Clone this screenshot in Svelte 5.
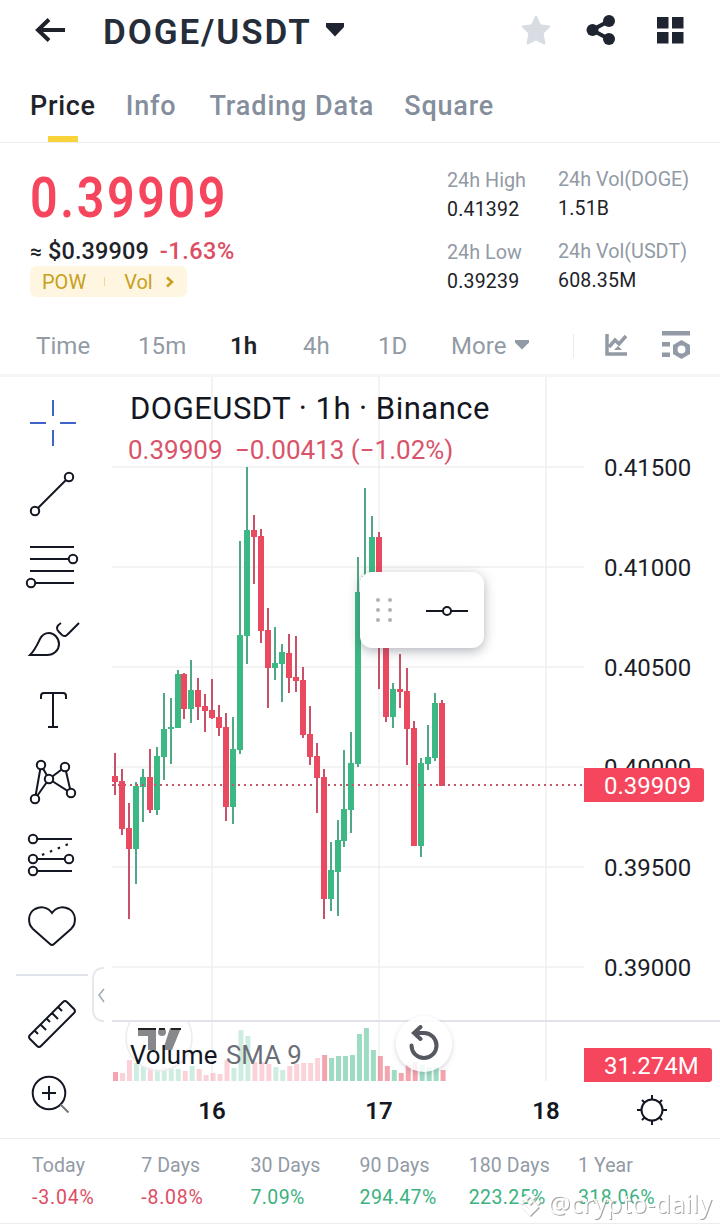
<script>
    const tabs = ['Price', 'Info', 'Trading Data', 'Square'];
    const intervals = ['Time', '15m', '1h', '4h', '1D'];

    const market = [
        { label: '24h High', value: '0.41392' },
        { label: '24h Vol(DOGE)', value: '1.51B' },
        { label: '24h Low', value: '0.39239' },
        { label: '24h Vol(USDT)', value: '608.35M' }
    ];

    const performance = [
        { label: 'Today', value: '-3.04%' },
        { label: '7 Days', value: '-8.08%' },
        { label: '30 Days', value: '7.09%' },
        { label: '90 Days', value: '294.47%' },
        { label: '180 Days', value: '223.25%' },
        { label: '1 Year', value: '318.06%' }
    ];

    const levels = [
        { y: 467, text: '0.41500' },
        { y: 567, text: '0.41000' },
        { y: 667, text: '0.40500' },
        { y: 767, text: '0.40000' },
        { y: 867, text: '0.39500' },
        { y: 967, text: '0.39000' }
    ];

    const days = [
        { x: 212, text: '16' },
        { x: 379, text: '17' },
        { x: 546, text: '18' }
    ];

    // x, high, body top, body bottom, low, rising, volume height
    const candles = [
        [115, 753, 776, 782, 795, 0, 9], [122, 769, 781, 829, 835, 0, 8],
        [129, 803, 828, 849, 919, 0, 21], [136, 782, 786, 849, 884, 1, 18],
        [143, 769, 777, 787, 822, 1, 16], [150, 749, 777, 810, 813, 0, 14],
        [157, 747, 756, 810, 815, 1, 12], [164, 693, 729, 757, 780, 1, 14],
        [171, 698, 727, 729, 764, 1, 12], [178, 670, 674, 728, 728, 1, 12],
        [184, 673, 674, 709, 719, 0, 10], [191, 660, 690, 709, 723, 1, 15],
        [198, 678, 690, 707, 720, 0, 12], [205, 694, 706, 711, 732, 0, 6],
        [212, 679, 710, 718, 719, 0, 8], [219, 705, 717, 728, 736, 0, 7],
        [226, 713, 727, 807, 821, 0, 21], [233, 717, 749, 807, 824, 1, 13],
        [240, 541, 635, 750, 754, 1, 51], [247, 467, 530, 636, 664, 1, 45],
        [254, 515, 530, 537, 584, 0, 19], [261, 529, 536, 631, 643, 0, 19],
        [268, 608, 630, 668, 708, 0, 17], [275, 627, 663, 668, 680, 1, 14],
        [282, 644, 652, 664, 702, 1, 11], [289, 634, 653, 678, 693, 0, 15],
        [296, 636, 677, 681, 692, 0, 17], [303, 667, 680, 735, 738, 0, 18],
        [310, 706, 734, 757, 765, 0, 18], [317, 743, 756, 778, 813, 0, 23],
        [324, 769, 777, 899, 919, 0, 26], [331, 842, 870, 899, 911, 1, 23],
        [338, 820, 840, 872, 916, 1, 25], [344, 750, 809, 841, 847, 1, 25],
        [351, 732, 763, 810, 833, 1, 26], [358, 557, 592, 764, 767, 1, 47],
        [365, 488, 576, 592, 600, 1, 53], [372, 516, 537, 576, 600, 1, 31],
        [379, 532, 537, 620, 689, 0, 25], [386, 600, 620, 717, 722, 0, 15],
        [393, 683, 689, 717, 728, 1, 11], [400, 654, 689, 692, 708, 0, 8],
        [407, 668, 691, 729, 765, 0, 16], [414, 721, 728, 846, 846, 0, 19],
        [421, 758, 763, 846, 857, 1, 16], [428, 725, 757, 764, 770, 1, 14],
        [435, 693, 703, 758, 761, 1, 14], [442, 700, 703, 786, 786, 0, 11]
    ].map(([x, high, top, bottom, low, up, volume], i) => ({
        x, high, top, bottom, low, volume, i,
        side: up ? 'up' : 'down',
        faded: i > 0 && i < 30
    }));
</script>

<div class="page">
    <header>
        <svg class="back" width="32" height="28" viewBox="0 0 32 28">
            <path d="M30 14H3M14 3.500 3 14l11 10.500" />
        </svg>
        <h1>DOGE/USDT</h1>
        <svg class="caret" width="18" height="14" viewBox="0 0 18 14">
            <path d="M0 0h18v4l-9 9.500L0 4z" />
        </svg>
        <div class="actions">
            <svg width="32" height="32" viewBox="0 0 32 32">
                <path class="star" d="m16 2.500 4.100 8.700 9.400 1.200-6.900 6.600 1.800 10.500L16 25.400l-8.400 4.100L9.400 19l-6.900-6.600 9.400-1.200z" />
            </svg>
            <svg width="32" height="32" viewBox="0 0 32 32">
                <path class="link" d="M24 7 7 16l17 9" />
                <circle cx="24" cy="7" r="6" /><circle cx="7.500" cy="16" r="6" /><circle cx="24" cy="25" r="6" />
            </svg>
            <svg width="28" height="28" viewBox="0 0 28 28">
                <path d="M1 1h11.500v11.500H1zM16 1h11.500v11.500H16zM1 16h11.500v11.500H1zM16 16h11.500v11.500H16z" />
            </svg>
        </div>
    </header>

    <nav class="tabs">
        {#each tabs as tab, i}
            <span class:active={i === 0}>{tab}</span>
        {/each}
    </nav>

    <section class="summary">
        <div class="quote">
            <div class="price">0.39909</div>
            <div class="fiat"><span class="approx">≈</span> $0.39909 <span class="change">-1.63%</span></div>
            <div class="tags">
                <span>POW</span>
                <i></i>
                <span>Vol</span>
                <svg width="10" height="12" viewBox="0 0 10 12"><path d="m2 1.500 5 4.500-5 4.500" /></svg>
            </div>
        </div>
        <dl class="market">
            {#each market as item}
                <div>
                    <dt>{item.label}</dt>
                    <dd>{item.value}</dd>
                </div>
            {/each}
        </dl>
    </section>

    <nav class="intervals">
        {#each intervals as interval}
            <span class:active={interval === '1h'}>{interval}</span>
        {/each}
        <span class="more">More <svg width="14" height="10" viewBox="0 0 14 10"><path d="M0 0h14v2.500L7 9.500 0 2.500z" /></svg></span>
        <i></i>
        <svg class="indicator" width="24" height="24" viewBox="0 0 24 24">
            <path class="line" d="M2 1v20h20M4 14l6-7 4 4 7-8" />
            <path d="m9 17 4-4 4 4z" />
        </svg>
        <svg class="settings" width="28" height="28" viewBox="0 0 28 28">
            <path d="M0 0h28v4.500H0zM0 11h8v4.500H0zM0 21.500h8V26H0z" />
            <path fill-rule="evenodd" d="m19.500 9 8.500 5v9l-8.500 5-8.500-5v-9zM19.500 14.500a4 4 0 1 0 0 8 4 4 0 0 0 0-8z" />
        </svg>
    </nav>

    <main>
        <aside class="toolbar">
            <svg viewBox="-30 -36 60 72" class="cross">
                <path d="M1-23v16M1 7v16M-22 0h16M8 0h16" />
            </svg>
            <svg viewBox="-30 -36 60 72">
                <path d="m-17 16 34-34" />
                <circle cx="-17" cy="16" r="4.200" /><circle cx="17" cy="-18" r="4.200" />
            </svg>
            <svg viewBox="-30 -36 60 72">
                <path d="M-22-20h44M-22-8h44M-22 4h44M-22 16h44" />
                <circle cx="21" cy="-8" r="4.200" /><circle cx="-21" cy="16" r="4.200" />
            </svg>
            <svg viewBox="-30 -36 60 72">
                <path d="M-22 16C-17 11-15 6-12 0C-9-6-4-6-3-6C2-6 7-1 7 5S2 16-5 16zM9-16c-5 3-5 6-2 9l3 3c3 2 4 1 6-1L27-16" />
            </svg>
            <svg viewBox="-30 -36 60 72">
                <path d="M-11-12v-3q0-3 3-3H11q3 0 3 3v3M1-18v34M-4 16H6" />
            </svg>
            <svg viewBox="-30 -36 60 72">
                <path d="M-17 16-11-18-3-4-17 16M-3-4 13-16 19 10z" />
                <circle cx="-11" cy="-18" r="4.200" /><circle cx="13" cy="-16" r="4.200" />
                <circle cx="-3" cy="-4" r="4.200" /><circle cx="-17" cy="16" r="4.200" /><circle cx="19" cy="10" r="4.200" />
            </svg>
            <svg viewBox="-30 -36 60 72">
                <path d="M-19-16h39M-19 4h36M-19 16h39" />
                <path class="dots" d="m-10 0 29-12" />
                <circle cx="-19" cy="-16" r="4.200" /><circle cx="-19" cy="4" r="4.200" />
                <circle cx="17" cy="4" r="4.200" /><circle cx="-19" cy="16" r="4.200" />
            </svg>
            <svg viewBox="-30 -36 60 72">
                <path d="M0-14C-4-20-11-21-17-18c-7 4-8 14-2 20L-2 17q2 2 4 0L19 2c6-6 5-16-2-20C11-21 4-20 0-14z" />
            </svg>
            <hr />
            <svg viewBox="-30 -36 60 72">
                <path d="M11-22q2-2 4 0l7 7q2 2 0 4L-11 22q-2 2-4 0l-7-7q-2-2 0-4zM-18 6l4 4M-12 0l6 6M-6-6l4 4M0-11l6 6M6-17l4 4" />
            </svg>
            <svg viewBox="-30 -36 60 72">
                <circle cx="-3" cy="-3" r="16.300" />
                <path d="M-3-10V4M-10-3H4" />
                <path class="handle" d="m8.500 8.500 8 8" />
            </svg>
        </aside>

        <div class="chart">
            <svg width="628" height="761" viewBox="92 377 628 761">
                {#each days as day}
                    <path class="grid" d="M{day.x} 377V1081" />
                    <text class="day" x={day.x} y="1119">{day.text}</text>
                {/each}
                {#each levels as level}
                    <path class="grid" d="M112 {level.y}H584" />
                    <text class="level" x="604" y={level.y + 9}>{level.text}</text>
                {/each}
                <path class="pane" d="M112 1021H720" />

                {#each candles as c}
                    <g class={c.side}>
                        <rect x={c.x - 1} y={c.high} width="2" height={c.low - c.high} class="wick" />
                        <rect x={c.x - 3} y={c.top} width="6" height={c.bottom - c.top} />
                        <rect x={113 + c.i * 6.97} y={1081 - c.volume} width="5" height={c.volume} class="volume" class:faded={c.faded} />
                    </g>
                {/each}

                <path class="last" d="M112 785H584" />
                <path class="tag" d="M584 768h117q3 0 3 3v28q0 3-3 3H584zM584 1048h125q3 0 3 3v28q0 3-3 3H584z" />
                <text class="tag-text" x="604" y="794">0.39909</text>
                <text class="tag-text" x="604" y="1074">31.274M</text>

                <text class="symbol" x="130" y="419">DOGEUSDT · 1h · Binance</text>
                <text class="delta" x="128" y="459">0.39909</text>
                <text class="delta" x="235" y="459">−0.00413 (−1.02%)</text>

                <path class="logo-disc" d="M130 1022A33 33 0 1 0 188 1022" />
                <path class="logo" d="M138 1028h18v22h-8v-14h-10zM170 1028h11l-9 22h-9z" />
                <circle class="logo" cx="162" cy="1032" r="4" />
                <path class="logo-top" d="M138 1029h18M159 1029h6M171 1029h10" />
                <text class="legend" x="130" y="1064">Volume</text>
                <text class="legend muted" x="226" y="1064">SMA 9</text>

                <path class="collapse" d="M104 968q-11 0-11 12v29q0 12 11 12" />
                <path class="chevron" d="m104 989-5 6 5 7" />

                <g class="sun">
                    <circle cx="652" cy="1110" r="10.500" />
                    <path d="M652 1095v4M652 1121v4M637 1110h4M663 1110h4M642 1100l2.500 2.500M659.500 1117.500l2.500 2.500M662 1100l-2.500 2.500M644.500 1117.500l-2.500 2.500" />
                </g>
            </svg>

            <div class="floating">
                <svg width="20" height="28" viewBox="0 0 20 28">
                    {#each [4, 14, 24] as y}
                        <circle cx="4" cy={y} r="2" /><circle cx="16" cy={y} r="2" />
                    {/each}
                </svg>
                <svg class="stroke" width="42" height="12" viewBox="0 0 42 12">
                    <path d="M0 6h42" />
                    <circle cx="21" cy="6" r="4" />
                </svg>
            </div>

            <div class="reset">
                <svg width="32" height="38" viewBox="0 0 32 38">
                    <path d="M3.500 20.500A12.500 12.500 0 1 0 16 8H6M12.500 2 6 8l6.500 6" />
                </svg>
            </div>
        </div>
    </main>

    <footer>
        {#each performance as item}
            <div>
                <span>{item.label}</span>
                <b class:negative={item.value.startsWith('-')}>{item.value}</b>
            </div>
        {/each}
        <div class="watermark">
            <svg width="26" height="28" viewBox="0 0 26 28">
                <path d="m7 8 6-6 6 6-3 3-3-3-3 3zM2 13l3-3 3 3-3 3zM18 13l3-3 3 3-3 3zM10 13l3-3 3 3-3 3zM4 18l3-3 6 6 6-6 3 3-9 9z" />
            </svg>
            <span>@crypto-daily</span>
        </div>
    </footer>
</div>

<style>
    :global(body) {
        background: #fff;
    }

    .page {
        width: 720px;
        height: 1225px;
        overflow: hidden;
        position: relative;
        background: #fff;
        color: #1e2329;
        font-family: Roboto, "Liberation Sans", sans-serif;
    }

    svg {
        display: block;
        flex: none;
    }

    header {
        display: flex;
        align-items: center;
        height: 60px;
        padding: 0 36px 0 35px;
    }

    .back path {
        fill: none;
        stroke: #1e2329;
        stroke-width: 4;
    }

    h1 {
        margin: 5px 0 0 36px;
        width: 208px;
        font-size: 35px;
        font-weight: 600;
        line-height: 40px;
        letter-spacing: 1.9px;
        white-space: nowrap;
        color: #252d3b;
    }

    .caret {
        margin-left: 15px;
        fill: #1e2530;
    }

    .actions {
        display: flex;
        align-items: center;
        gap: 33px;
        margin-left: auto;
        fill: #1e2530;
    }

    .actions svg:last-child {
        margin-left: 6px;
    }

    .star {
        fill: #d9dde3;
        stroke: #d9dde3;
        stroke-width: 2;
        stroke-linejoin: round;
    }

    .link {
        fill: none;
        stroke: #1e2530;
        stroke-width: 4;
    }

    .tabs {
        display: flex;
        gap: 30px;
        height: 82px;
        padding: 0 30px;
        border-bottom: 1px solid #eaecef;
        font-size: 27px;
        font-weight: 500;
        line-height: 93px;
        letter-spacing: 0.8px;
        color: #848e9c;
    }

    .tabs span:nth-child(3) {
        letter-spacing: 0.9px;
        margin-left: 3px;
    }

    .tabs .active {
        position: relative;
        letter-spacing: 0.7px;
        color: #1e2329;
    }

    .tabs .active::after {
        content: '';
        position: absolute;
        left: 18px;
        bottom: 0;
        width: 30px;
        height: 6px;
        background: #f8d33a;
    }

    .summary {
        display: flex;
        height: 173px;
    }

    .quote {
        width: 417px;
        padding: 24px 0 0 30px;
    }

    .price {
        height: 62px;
        font-size: 55px;
        font-weight: 600;
        line-height: 62px;
        letter-spacing: 3px;
        transform: scaleX(0.88);
        transform-origin: 0 0;
        color: #f6465d;
    }

    .fiat {
        margin-top: 7px;
        font-size: 23.500px;
        font-weight: 500;
        line-height: 30px;
        letter-spacing: 0.1px;
        white-space: nowrap;
    }

    .approx {
        font-size: 21px;
    }

    .change {
        margin-left: 5px;
        letter-spacing: 0.5px;
        color: #dd4d64;
    }

    .tags {
        display: flex;
        align-items: center;
        box-sizing: border-box;
        width: 157px;
        height: 31px;
        margin-top: -1px;
        padding: 0 12px;
        border-radius: 7px;
        background: #fef6e0;
        font-size: 20px;
        color: #c99f1d;
    }

    .tags i {
        width: 1px;
        height: 9px;
        margin: 0 19px 0 18px;
        background: #ecd99a;
    }

    .tags svg {
        margin-left: auto;
        fill: none;
        stroke: #c99f1d;
        stroke-width: 2.5;
    }

    .market {
        display: grid;
        grid-template-columns: 111px 150px;
        grid-auto-rows: 72px;
        margin: 0;
        padding-top: 25px;
        white-space: nowrap;
    }

    .market div:nth-child(even) {
        margin-top: -1px;
    }

    .market dt {
        font-size: 19.800px;
        line-height: 26px;
        color: #929aa5;
    }

    .market dd {
        margin: 3px 0 0;
        font-size: 19.500px;
        line-height: 26px;
        letter-spacing: 0.2px;
    }

    .intervals {
        display: flex;
        align-items: center;
        box-sizing: border-box;
        height: 61px;
        padding: 2px 30px 0 36px;
        border-bottom: 3px solid #f5f5f5;
        font-size: 24px;
        letter-spacing: 0.1px;
        color: #929aa5;
    }

    .intervals span:nth-child(1) { width: 102px; }
    .intervals span:nth-child(2) { width: 92px; }
    .intervals span:nth-child(3) { width: 73px; }
    .intervals span:nth-child(4) { width: 75px; }
    .intervals span:nth-child(5) { width: 73px; }

    .intervals .active {
        font-weight: 600;
        color: #1e2329;
    }

    .intervals svg {
        fill: #929aa5;
        margin-top: -2px;
    }

    .more {
        display: flex;
        align-items: center;
        gap: 8px;
        width: 122px;
    }

    .intervals i {
        width: 1px;
        height: 24px;
        margin-right: 31px;
        background: #eaecef;
    }

    .indicator .line {
        fill: none;
        stroke: #929aa5;
        stroke-width: 3.5;
    }

    .intervals .settings {
        margin-left: auto;
    }

    main {
        display: flex;
        height: 761px;
    }

    .toolbar {
        display: flex;
        flex-direction: column;
        width: 92px;
        padding-top: 10px;
        box-sizing: border-box;
    }

    .toolbar svg {
        width: 60px;
        height: 72px;
        margin-left: 22px;
        fill: none;
        stroke: #131722;
        stroke-width: 2;
    }

    .toolbar circle {
        fill: #fff;
    }

    .toolbar .cross {
        stroke: #3f63c9;
    }

    .toolbar .dots {
        stroke-dasharray: 2.5 6;
    }

    .toolbar .handle {
        stroke: #73767d;
    }

    .toolbar hr {
        width: 72px;
        height: 2px;
        margin: 11px 0 12px 16px;
        border: 0;
        background: #dfe4ea;
    }

    .chart {
        position: relative;
        width: 628px;
    }

    .grid {
        stroke: #efefef;
        stroke-width: 1.5;
    }

    .pane {
        stroke: #e0e3eb;
        stroke-width: 2;
    }

    .up {
        fill: #3cb885;
    }

    .down {
        fill: #ea4a60;
    }

    .up .wick {
        fill: #4fa883;
    }

    .down .wick {
        fill: #c85267;
    }

    .volume {
        opacity: 0.5;
    }

    .faded {
        opacity: 0.25;
    }

    .last {
        stroke: #c8566a;
        stroke-width: 2;
        stroke-dasharray: 2 4;
    }

    .level,
    .tag-text {
        font-size: 24px;
        fill: #1b1e27;
    }

    .tag {
        fill: #f6465d;
    }

    .chart .tag-text {
        fill: #fff;
    }

    .day {
        font-size: 24px;
        font-weight: 600;
        text-anchor: middle;
        fill: #131722;
    }

    .symbol {
        font-size: 31px;
        letter-spacing: 0.48px;
        fill: #131722;
    }

    .delta {
        font-size: 26px;
        fill: #d9536a;
    }

    .logo-disc {
        fill: #fff;
        fill-opacity: 0.8;
        stroke: #ececef;
        stroke-width: 1.5;
    }

    .logo {
        fill: #87888c;
    }

    .logo-top {
        stroke: #222;
        stroke-width: 2;
    }

    .legend {
        font-size: 25.800px;
        fill: #131722;
    }

    .muted {
        fill: #6b6e76;
    }

    .collapse {
        fill: #fff;
        stroke: #e6e8eb;
        stroke-width: 2;
    }

    .chevron {
        fill: none;
        stroke: #a0aab4;
        stroke-width: 1.5;
    }

    .sun {
        fill: none;
        stroke: #131722;
        stroke-width: 2;
    }

    .floating {
        position: absolute;
        left: 268px;
        top: 195px;
        display: flex;
        align-items: center;
        justify-content: space-between;
        box-sizing: border-box;
        width: 124px;
        height: 76px;
        padding: 0 16px 0 14px;
        border-radius: 12px;
        background: #fff;
        box-shadow: 0 3px 12px rgba(70, 75, 90, 0.42);
        fill: #b2b2b2;
    }

    .stroke {
        fill: #fff;
        stroke: #131722;
        stroke-width: 2;
        margin-top: 2px;
    }

    .reset {
        position: absolute;
        left: 304px;
        top: 639px;
        display: flex;
        align-items: center;
        justify-content: center;
        width: 56px;
        height: 56px;
        border-radius: 50%;
        background: rgba(255, 255, 255, 0.85);
        box-shadow: 0 2px 5px rgba(70, 75, 90, 0.22);
    }

    .reset path {
        fill: none;
        stroke: #555861;
        stroke-width: 4;
        stroke-linecap: round;
    }

    footer {
        position: relative;
        display: flex;
        box-sizing: border-box;
        height: 86px;
        padding: 14px 0 0 32px;
        border-top: 1px solid #eaecef;
        border-bottom: 1px solid #eaecef;
        white-space: nowrap;
    }

    footer > div:not(.watermark) {
        width: 109.200px;
    }

    footer span {
        display: block;
        font-size: 19.500px;
        line-height: 26px;
        letter-spacing: 0.1px;
        color: #929aa5;
    }

    footer b {
        display: block;
        margin-top: 6px;
        font-size: 19.500px;
        font-weight: 400;
        line-height: 26px;
        letter-spacing: 0.4px;
        color: #3bb27f;
    }

    footer .negative {
        letter-spacing: 0.8px;
        color: #dd4d64;
    }

    .watermark {
        position: absolute;
        left: 517px;
        top: 48px;
        display: flex;
        align-items: center;
        gap: 5px;
        fill: #fff;
        opacity: 0.88;
        filter: drop-shadow(1px 1px 0.500px #999);
    }

    .watermark span {
        font-family: "Noto Sans", sans-serif;
        font-size: 25px;
        line-height: 32px;
        letter-spacing: 0.3px;
        color: #fff;
    }
</style>
